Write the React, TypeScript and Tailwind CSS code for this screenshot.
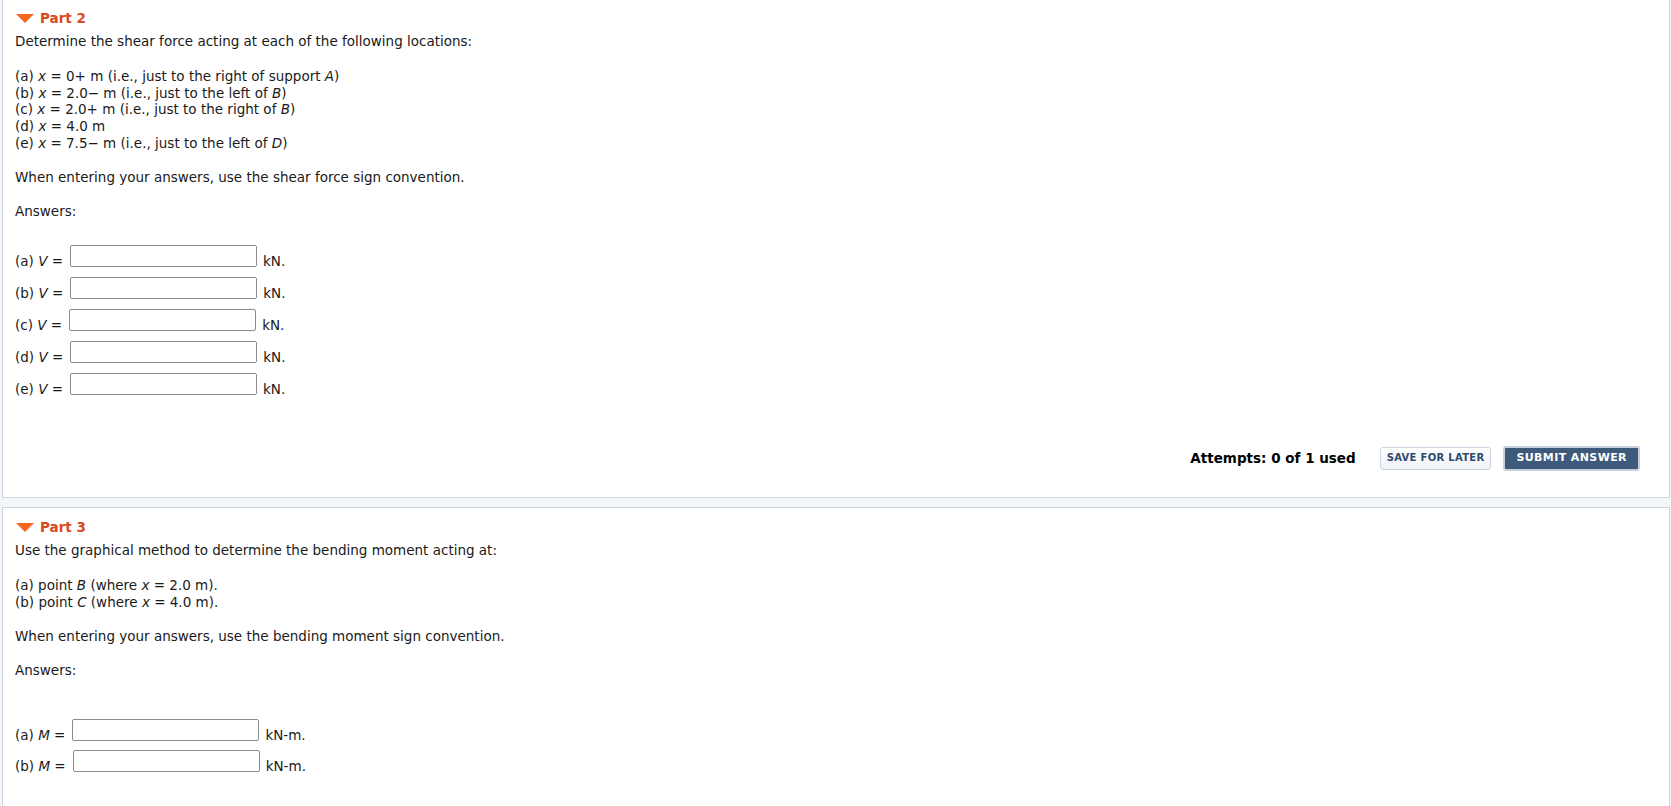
const font = "font-['DejaVu_Sans',Verdana,sans-serif]";

function Heading({ label }: { label: string }) {
  return (
    <div className="flex items-center gap-[6px] h-[17px]">
      <svg width="18" height="10" viewBox="0 0 18 10" className="ml-[1px]">
        <polygon points="0,0 18,0 9,9" fill="#f5661e" />
      </svg>
      <span className="text-[13.5px] font-bold text-[#d9491c] leading-none">{label}</span>
    </div>
  );
}

function AnswerRow({ label, v, unit }: { label: string; v: string; unit: string }) {
  return (
    <div className="flex items-end h-[22px]">
      <span className="mb-[-2px]">
        ({label}) <i>{v}</i> =
      </span>
      <input
        className="ml-[7px] w-[187px] h-[22px] border border-[#8b8b8b] rounded-[2px] bg-white outline-none"
        type="text"
      />
      <span className="ml-[6px] mb-[-2px]">{unit}</span>
    </div>
  );
}

export default function App() {
  const shear = ["a", "b", "c", "d", "e"];
  return (
    <div className={`${font} bg-[#f4f7fa] min-h-[806px] flex flex-col text-[13.5px] leading-[16.8px] text-[#1a1a1a] pl-[2px] pr-[1px]`}>
      {/* Part 2 */}
      <div className="bg-white border border-[#ccd4de] border-t-0 pt-[10px] pb-[26px] px-[12px]">
        <Heading label="Part 2" />
        <p className="mt-[6px]">Determine the shear force acting at each of the following locations:</p>
        <div className="mt-[18px]">
          <div>(a) <i>x</i> = 0+ m (i.e., just to the right of support <i>A</i>)</div>
          <div>(b) <i>x</i> = 2.0− m (i.e., just to the left of <i>B</i>)</div>
          <div>(c) <i>x</i> = 2.0+ m (i.e., just to the right of <i>B</i>)</div>
          <div>(d) <i>x</i> = 4.0 m</div>
          <div>(e) <i>x</i> = 7.5− m (i.e., just to the left of <i>D</i>)</div>
        </div>
        <p className="mt-[17px]">When entering your answers, use the shear force sign convention.</p>
        <p className="mt-[17px]">Answers:</p>
        <div className="mt-[26px] flex flex-col gap-[10px]">
          {shear.map((l) => (
            <AnswerRow key={l} label={l} v="V" unit="kN." />
          ))}
        </div>
        <div className="mt-[51px] flex items-center justify-end pr-[17px]">
          <span className="text-[13.5px] font-bold text-black">Attempts: 0 of 1 used</span>
          <button className="ml-[24px] h-[23px] px-[6px] rounded-[3px] border border-[#cbd5e1] bg-gradient-to-b from-white to-[#eef2f7] text-[10px] font-bold text-[#2d4a70] tracking-[0.3px]">
            SAVE FOR LATER
          </button>
          <button className="ml-[12px] h-[25px] px-[11px] rounded-[3px] border-2 border-[#c5d0dc] bg-[#3d5a7a] text-[11px] font-bold text-white tracking-[0.4px]">
            SUBMIT ANSWER
          </button>
        </div>
      </div>

      {/* Part 3 */}
      <div className="flex-1 mt-[9px] bg-white border border-[#ccd4de] border-b-0 pt-[11px] pb-[30px] px-[12px]">
        <Heading label="Part 3" />
        <p className="mt-[6px]">Use the graphical method to determine the bending moment acting at:</p>
        <div className="mt-[18px]">
          <div>(a) point <i>B</i> (where <i>x</i> = 2.0 m).</div>
          <div>(b) point <i>C</i> (where <i>x</i> = 4.0 m).</div>
        </div>
        <p className="mt-[17px]">When entering your answers, use the bending moment sign convention.</p>
        <p className="mt-[17px]">Answers:</p>
        <div className="mt-[41px] flex flex-col gap-[9px]">
          <AnswerRow label="a" v="M" unit="kN-m." />
          <AnswerRow label="b" v="M" unit="kN-m." />
        </div>
      </div>
    </div>
  );
}
